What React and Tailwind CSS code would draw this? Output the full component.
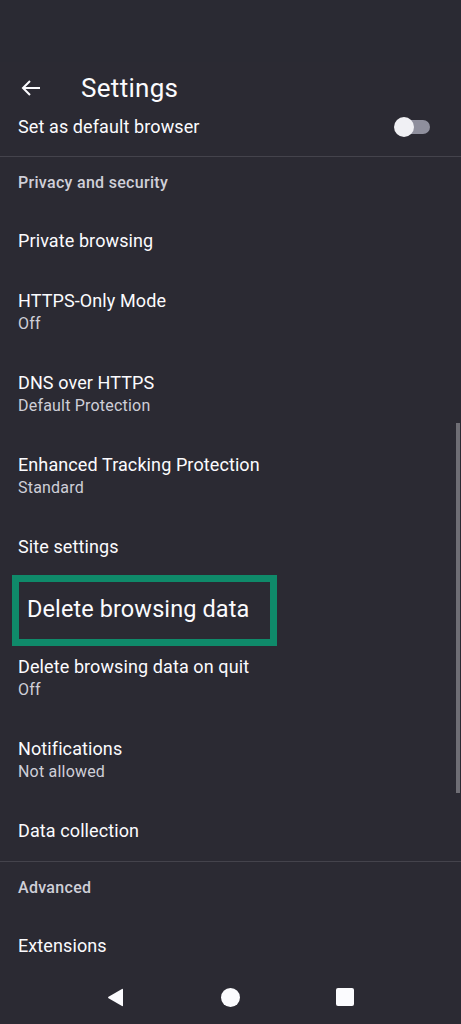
import React from "react";

const Row = ({ title, sub, height = "h-[60px]" }) => (
  <div className={`${height} flex flex-col justify-center px-[18px]`}>
    <div className="text-[18px] leading-[24px] tracking-[0.1px] text-[#fbfbfe]">{title}</div>
    {sub && <div className="text-[16px] leading-[22px] tracking-[0.2px] text-[#cfcfd8]">{sub}</div>}
  </div>
);

const Header = ({ title }) => (
  <div className="h-[54px] flex items-center px-[18px] pb-[2px] text-[16px] font-medium tracking-[0.3px] text-[#cfcfd8]">
    {title}
  </div>
);

const App = () => {
  return (
    <div
      className="relative w-[461px] h-[1024px] overflow-hidden bg-[#2b2a33] flex flex-col"
      style={{ fontFamily: "Roboto, 'Noto Sans', sans-serif" }}
    >
      {/* status bar */}
      <div className="h-[62px] bg-[#2a2a33]"></div>

      {/* toolbar */}
      <div className="h-[56px] flex items-center pb-[4px]">
        <svg width="24" height="24" viewBox="0 0 24 24" className="ml-[19px]" fill="none" stroke="#fbfbfe" strokeWidth="2">
          <path d="M21 12H4M11 5l-7 7 7 7" />
        </svg>
        <div className="ml-[38px] text-[26px] tracking-[0.3px] text-[#fbfbfe] leading-none">Settings</div>
      </div>

      <div className="h-[38px] flex items-center justify-between px-[18px] pb-[20px]">
        <div className="text-[18px] tracking-[0.1px] text-[#fbfbfe] leading-[22px]">Set as default browser</div>
        <div className="relative w-[36px] h-[20px] mr-[13px] flex items-center">
          <div className="absolute left-[3px] right-0 h-[14px] rounded-full bg-[#8f8f9d]"></div>
          <div className="absolute left-0 w-[20px] h-[20px] rounded-full bg-[#f0f0f4]"></div>
        </div>
      </div>

      <div className="h-px bg-[#44434c]"></div>

      <Header title="Privacy and security" />
      <Row title="Private browsing" />
      <Row title="HTTPS-Only Mode" sub="Off" height="h-[82px]" />
      <Row title="DNS over HTTPS" sub="Default Protection" height="h-[82px]" />
      <Row title="Enhanced Tracking Protection" sub="Standard" height="h-[82px]" />
      <Row title="Site settings" />

      <div className="h-[60px] relative">
        <div className="absolute left-[12px] top-[-2px] w-[265px] h-[71px] border-[7px] border-[#0f8a6a] flex items-center pl-[8px] pb-[1px]">
          <span className="text-[23.5px] tracking-[0.1px] text-[#fbfbfe]">Delete browsing data</span>
        </div>
      </div>

      <Row title="Delete browsing data on quit" sub="Off" height="h-[82px]" />
      <Row title="Notifications" sub="Not allowed" height="h-[82px]" />
      <Row title="Data collection" />

      <div className="h-px bg-[#44434c]"></div>

      <Header title="Advanced" />
      <Row title="Extensions" />

      {/* nav bar */}
      <div className="absolute left-0 right-0 bottom-0 h-[60px] bg-[#2b2a33]">
        <svg width="18" height="19" viewBox="0 0 18 19" className="absolute left-[107px] top-[24px]">
          <path d="M16 1.5 L16 17.5 Q16 18.5 15 18 L1.5 10.3 Q0.5 9.5 1.5 8.7 L15 1 Q16 0.5 16 1.5Z" fill="#fbfbfe" />
        </svg>
        <div className="absolute left-[221px] top-[24px] w-[19px] h-[19px] rounded-full bg-[#fbfbfe]"></div>
        <div className="absolute left-[336px] top-[24px] w-[18px] h-[18px] rounded-[2px] bg-[#fbfbfe]"></div>
      </div>

      {/* scrollbar */}
      <div className="absolute left-[456px] top-[423px] w-[4px] h-[370px] bg-[#6f6e75]"></div>
    </div>
  );
};

export default App;
